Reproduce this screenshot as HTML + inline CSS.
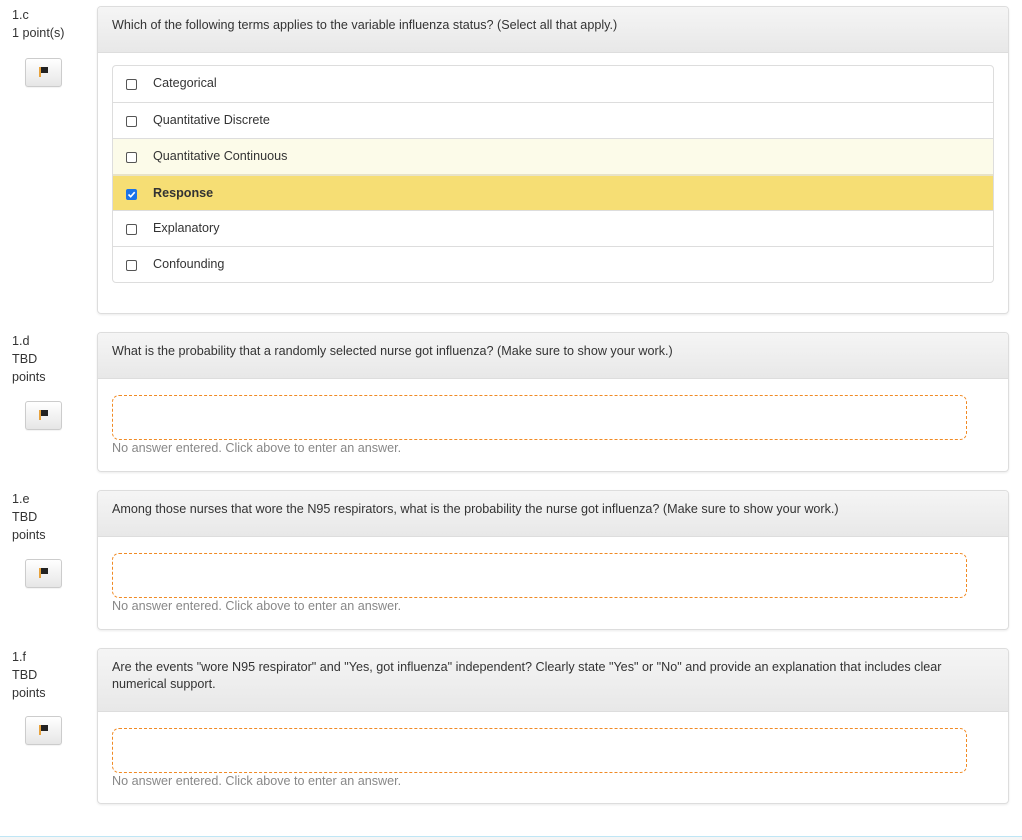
<!DOCTYPE html>
<html><head><meta charset="utf-8"><style>
*{box-sizing:border-box;margin:0;padding:0}
body{width:1022px;height:840px;background:#fff;font-family:"Liberation Sans",sans-serif;font-size:12.6px;color:#333;position:relative;overflow:hidden}
.a{position:absolute}
.lbl{left:12px;line-height:18px;font-size:12.6px;color:#333}
.flag{left:25px;width:37px;height:29px;border:1px solid #ccc;border-radius:3px;background:linear-gradient(#fff,#e6e6e6);box-shadow:0 1px 1px rgba(0,0,0,.05)}
.flag i{position:absolute;left:13px;top:8px;width:2px;height:10px;background:#e8a33d}
.flag b{position:absolute;left:15px;top:8px;width:7px;height:6px;background:#222}
.pan{left:97px;width:912px;border:1px solid #ddd;border-radius:4px;box-shadow:0 1px 2px rgba(0,0,0,.08);overflow:hidden}
.hd{background:linear-gradient(#f5f5f5,#e8e8e8);border-bottom:1px solid #ddd;padding:10px 14px;line-height:17px}
.list{left:14px;top:58px;width:882px;border:1px solid #ddd;border-radius:4px;overflow:hidden}
.row{height:36px;border-top:1px solid #ddd;position:relative;line-height:35px;padding-left:40px}
.row:first-child{border-top:none}
.cb{position:absolute;left:13px;top:13px;width:11px;height:11px;border:1px solid #555;border-radius:2px;background:#fff}
.ta{position:absolute;left:14px;width:855px;height:45px;border:1px dashed #f08a24;border-radius:7px}
.na{position:absolute;left:14px;color:#888}
</style></head><body>
<div class="a lbl" style="top:6px">1.c<br>1 point(s)</div>
<div class="a flag" style="top:58px"><i></i><b></b></div>
<div class="a pan" style="top:6px;height:308px">
<div class="hd" style="height:46px">Which of the following terms applies to the variable influenza status? (Select all that apply.)</div>
<div class="a list">
<div class="row"><span class="cb"></span>Categorical</div>
<div class="row"><span class="cb"></span>Quantitative Discrete</div>
<div class="row" style="background:#fcfbe9"><span class="cb"></span>Quantitative Continuous</div>
<div class="row" style="background:#f6de74;font-weight:bold;border-top:2px solid #e8e3c8"><span class="cb" style="background:#1a73e8;border-color:#1a73e8"><svg width="11" height="11" style="position:absolute;left:-1px;top:-1px"><path d="M2.5 5.5l2.2 2.2 4-4.5" stroke="#fff" stroke-width="1.6" fill="none"/></svg></span>Response</div>
<div class="row"><span class="cb"></span>Explanatory</div>
<div class="row"><span class="cb"></span>Confounding</div>
</div>
</div>

<div class="a lbl" style="top:332px">1.d<br>TBD<br>points</div>
<div class="a flag" style="top:401px"><i></i><b></b></div>
<div class="a pan" style="top:332px;height:140px">
<div class="hd" style="height:46px">What is the probability that a randomly selected nurse got influenza? (Make sure to show your work.)</div>
<div class="ta" style="top:62px"></div>
<div class="na" style="top:108px">No answer entered. Click above to enter an answer.</div>
</div>

<div class="a lbl" style="top:490px">1.e<br>TBD<br>points</div>
<div class="a flag" style="top:559px"><i></i><b></b></div>
<div class="a pan" style="top:490px;height:140px">
<div class="hd" style="height:46px">Among those nurses that wore the N95 respirators, what is the probability the nurse got influenza? (Make sure to show your work.)</div>
<div class="ta" style="top:62px"></div>
<div class="na" style="top:108px">No answer entered. Click above to enter an answer.</div>
</div>

<div class="a lbl" style="top:648px">1.f<br>TBD<br>points</div>
<div class="a flag" style="top:716px"><i></i><b></b></div>
<div class="a pan" style="top:648px;height:156px">
<div class="hd" style="height:63px">Are the events "wore N95 respirator" and "Yes, got influenza" independent? Clearly state "Yes" or "No" and provide an explanation that includes clear<br>numerical support.</div>
<div class="ta" style="top:79px"></div>
<div class="na" style="top:125px">No answer entered. Click above to enter an answer.</div>
</div>

<div class="a" style="left:0;top:836px;width:1022px;height:4px;border-top:1px solid #bfe6f5;background:#f5f5f5"></div>
</body></html>
